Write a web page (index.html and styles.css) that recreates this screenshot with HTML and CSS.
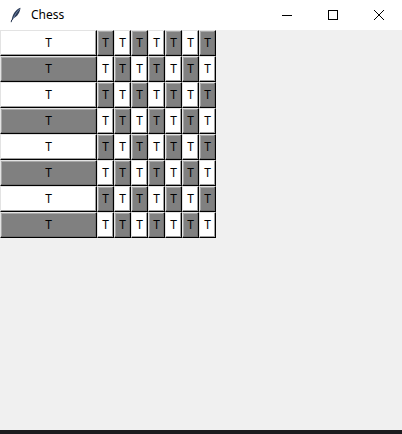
FILE: index.html
```html
<!DOCTYPE html>
<html>
<head>
<meta charset="utf-8">
<link rel="stylesheet" href="styles.css">
</head>
<body>
<div class="window">
  <div class="titlebar">
    <div class="title-left">
      <svg class="feather" width="12" height="16" viewBox="0 0 12 16">
        <path d="M10.5 0.8 C7 2 3.5 5.5 2.2 10.5 L1.6 13 L2.6 13.2 L3.4 11.4 C7.5 9.5 10 5.5 10.5 0.8 Z" fill="#2b3a55"/>
        <path d="M9.6 2.2 C7 4.5 5 7.5 3.4 11.4" stroke="#8aa4c8" stroke-width="0.7" fill="none"/>
        <path d="M1.6 13 L1.2 15.2" stroke="#2b3a55" stroke-width="1"/>
      </svg>
      <span class="title-text">Chess</span>
    </div>
    <div class="controls">
      <div class="ctrl">
        <svg width="10" height="10" viewBox="0 0 10 10"><line x1="0" y1="5.5" x2="10" y2="5.5" stroke="#000" stroke-width="1"/></svg>
      </div>
      <div class="ctrl">
        <svg width="10" height="10" viewBox="0 0 10 10"><rect x="0.5" y="0.5" width="9" height="9" fill="none" stroke="#000" stroke-width="1"/></svg>
      </div>
      <div class="ctrl">
        <svg width="10" height="10" viewBox="0 0 10 10"><path d="M0 0 L10 10 M10 0 L0 10" stroke="#000" stroke-width="1"/></svg>
      </div>
    </div>
  </div>
  <div class="client">
    <div class="board" id="board"></div>
  </div>
  <div class="taskbar"></div>
</div>
<script>
  var board = document.getElementById('board');
  for (var r = 0; r < 8; r++) {
    for (var c = 0; c < 8; c++) {
      var d = document.createElement('div');
      d.className = 'cell ' + (((r + c) % 2 === 0) ? 'light' : 'dark');
      d.textContent = 'T';
      board.appendChild(d);
    }
  }
</script>
</body>
</html>
```
FILE: styles.css
```css
html, body {
  margin: 0;
  padding: 0;
  width: 402px;
  height: 434px;
  overflow: hidden;
  background: #f0f0f0;
  font-family: "Noto Sans", "Open Sans", sans-serif;
}
.window {
  display: flex;
  flex-direction: column;
  width: 402px;
  height: 434px;
}
.titlebar {
  height: 30px;
  flex: none;
  background: #ffffff;
  display: flex;
  align-items: center;
  justify-content: space-between;
}
.title-left {
  display: flex;
  align-items: center;
  padding-left: 10px;
  gap: 9px;
}
.feather {
  display: block;
}
.title-text {
  font-size: 12px;
  color: #000;
  padding-bottom: 1px;
}
.controls {
  display: flex;
  height: 30px;
}
.ctrl {
  width: 46px;
  height: 30px;
  display: flex;
  align-items: center;
  justify-content: center;
}
.ctrl svg {
  display: block;
}
.client {
  flex: 1;
  background: #f0f0f0;
}
.board {
  display: grid;
  grid-template-columns: 97px repeat(7, 17px);
  grid-template-rows: repeat(8, 26px);
  width: 216px;
}
.cell {
  box-sizing: border-box;
  border-style: solid;
  border-width: 1px;
  border-color: #e3e3e3 #000 #000 #e3e3e3;
  box-shadow: inset -1px -1px 0 #a0a0a0, inset 1px 1px 0 #ffffff;
  display: flex;
  align-items: center;
  justify-content: center;
  font-size: 12px;
  color: #000;
  line-height: 1;
}
.cell.light {
  background: #ffffff;
}
.cell.dark {
  background: #808080;
  box-shadow: inset -1px -1px 0 #6e6e6e, inset 1px 1px 0 #a8a8a8;
}
.taskbar {
  height: 4px;
  flex: none;
  background: #1c1c1e;
}
```
